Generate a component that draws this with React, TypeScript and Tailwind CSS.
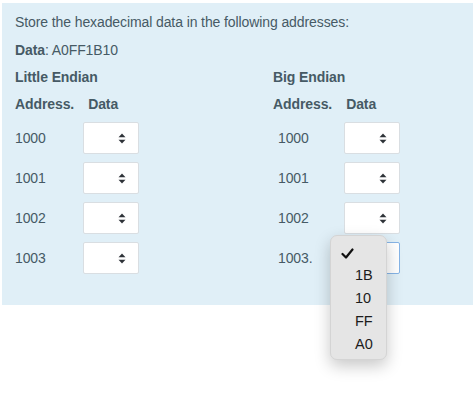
import React from 'react';

const ADDRESSES = ['1000', '1001', '1002', '1003'];
const OPTIONS = ['1B', '10', 'FF', 'A0'];

function Arrows() {
  return (
    <svg width="8" height="11" viewBox="0 0 8 11" className="block">
      <path d="M4 0.5 L7.5 4.3 L0.5 4.3 Z" fill="#2e3338" />
      <path d="M4 10.5 L7.5 6.7 L0.5 6.7 Z" fill="#2e3338" />
    </svg>
  );
}

function SelectBox({ focused }: { focused?: boolean }) {
  return (
    <div
      className={`w-[56px] h-[32px] bg-white rounded-[2px] flex items-center justify-end pr-[12px] ${
        focused ? 'border-[1.5px] border-[#86b4e6]' : 'border border-[#d9dee2]'
      }`}
    >
      {!focused && <Arrows />}
    </div>
  );
}

function Menu() {
  return (
    <div className="absolute left-[-14px] top-[-7px] w-[57px] h-[125px] rounded-[7px] bg-[#e5e5e5] border border-[#d4d4d4] shadow-[0_6px_16px_rgba(0,0,0,0.22)] z-10 pt-[8px]">
      <div className="h-[18px] pl-[10px] flex items-center">
        <svg width="13" height="11" viewBox="0 0 13 11">
          <path d="M1.5 6 L5 9.5 L11.5 1.5" stroke="#111" strokeWidth="2.2" fill="none" strokeLinecap="round" strokeLinejoin="round" />
        </svg>
      </div>
      <div className="flex flex-col pl-[24px] pt-[2px]">
        {OPTIONS.map((o) => (
          <div key={o} className="h-[23px] leading-[23px] text-[14.5px] tracking-normal text-[#1c1c1c]">
            {o}
          </div>
        ))}
      </div>
    </div>
  );
}

function Column({ title, dotLast, addrPad }: { title: string; dotLast?: boolean; addrPad: string }) {
  return (
    <div className="flex flex-col">
      <div className="font-bold leading-[18px] h-[18px]">{title}</div>
      <div className="flex font-bold leading-[18px] h-[18px] mt-[9px] gap-[14px]">
        <span>Address.</span>
        <span>Data</span>
      </div>
      <div className="flex flex-col gap-[8px] mt-[9px]">
        {ADDRESSES.map((a, i) => {
          const last = i === ADDRESSES.length - 1;
          return (
            <div key={a} className="flex items-center h-[32px]">
              <span className={`w-[68px] ${addrPad}`}>{a}{dotLast && last ? '.' : ''}</span>
              {dotLast && last ? (
                <div className="relative">
                  <SelectBox focused />
                  <Menu />
                </div>
              ) : (
                <SelectBox />
              )}
            </div>
          );
        })}
      </div>
    </div>
  );
}

export default function App() {
  return (
    <div className="w-[474px] h-[399px] bg-white font-['Liberation_Sans',Arial,sans-serif] text-[14px] tracking-[-0.1px] text-[#465a65]">
      <div className="ml-[2px] mr-[1px] mt-[3px] h-[302px] bg-[#e0eff7] pl-[13px] pt-[10px]">
        <div className="leading-[18px] h-[18px]">Store the hexadecimal data in the following addresses:</div>
        <div className="leading-[18px] h-[18px] mt-[10px]">
          <span className="font-bold">Data</span>: A0FF1B10
        </div>
        <div className="flex mt-[9px]">
          <div className="w-[258px]">
            <Column title="Little Endian" addrPad="" />
          </div>
          <Column title="Big Endian" dotLast addrPad="pl-[5px] w-[71px]" />
        </div>
      </div>
    </div>
  );
}
